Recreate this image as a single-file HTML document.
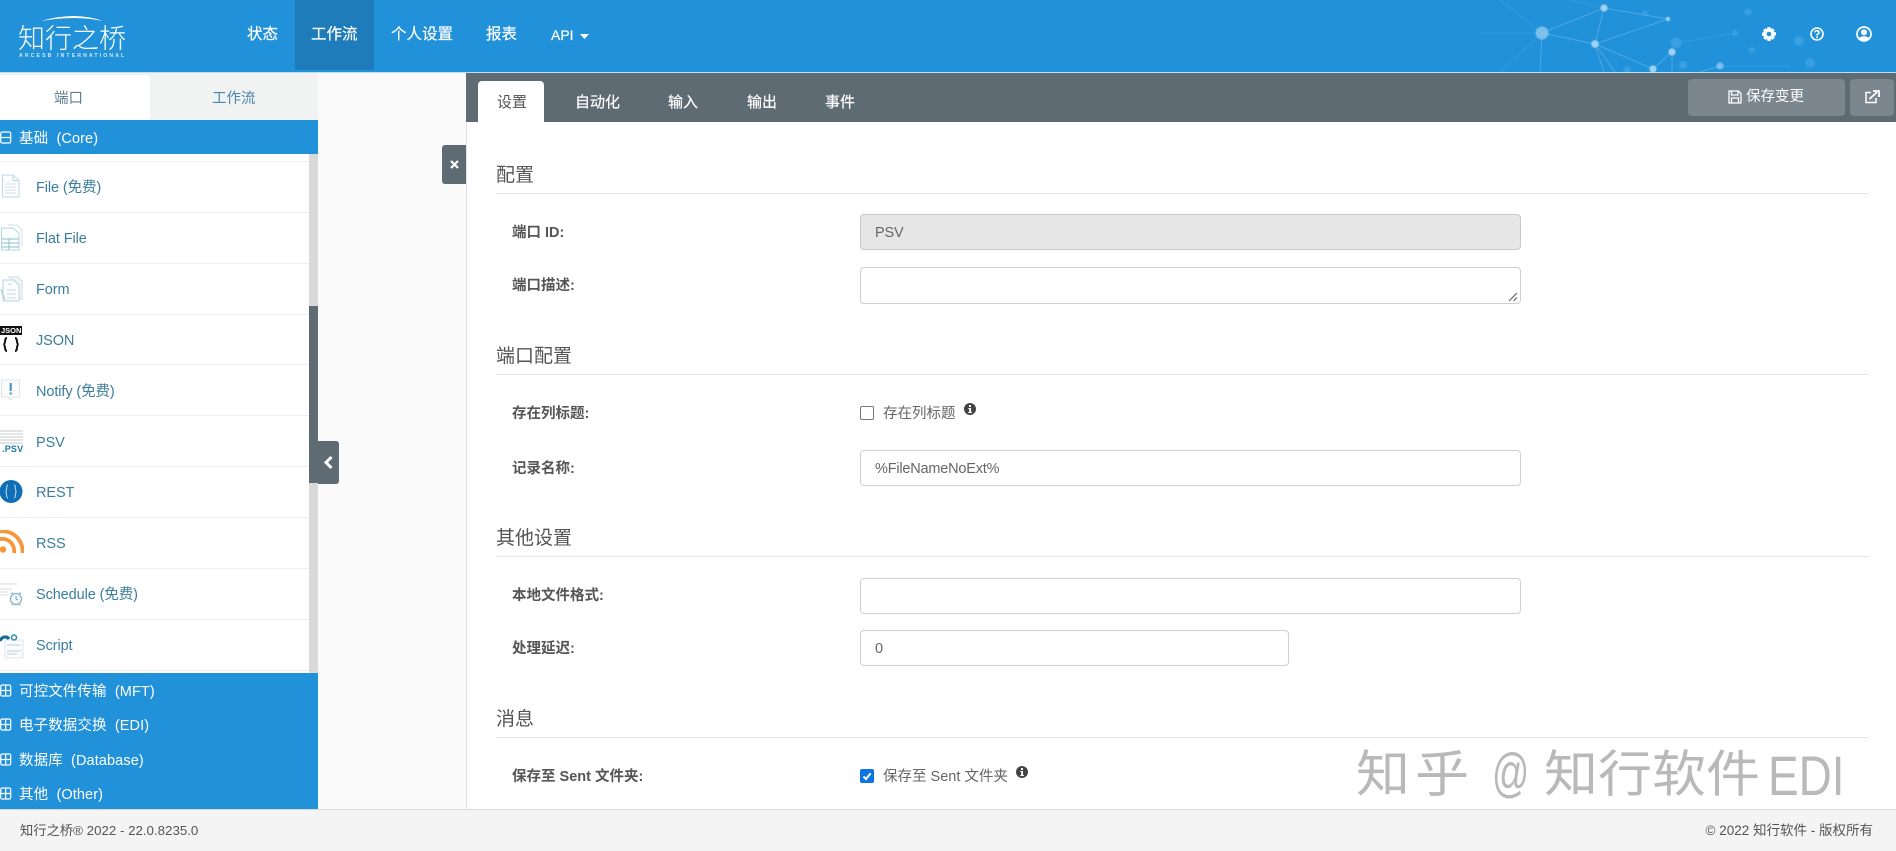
<!DOCTYPE html>
<html lang="zh"><head><meta charset="utf-8"><title>知行之桥</title>
<style>
html,body{margin:0;padding:0;width:1896px;height:851px;overflow:hidden;background:#fff}
body{position:relative;font-family:"Liberation Sans","Noto Sans CJK SC",sans-serif;font-size:14.5px;color:#555}
div,span,svg{position:absolute}
.t{white-space:nowrap;line-height:20px;height:20px}
.nav{color:#fff;font-size:15.5px;top:25px;-webkit-text-stroke:.2px #fff}
.tab{color:#fff;font-size:15px;top:93px;-webkit-text-stroke:.2px #fff}
.h{font-size:19px;color:#555;left:496px;line-height:26px;height:26px;white-space:nowrap}
.hr{left:496px;width:1373px;height:1px;background:#e5e5e5}
.lb{left:512px;font-weight:bold;font-size:14.5px;color:#555}
.in{left:860px;width:659px;height:34px;border:1px solid #cfcfcf;border-radius:4px;background:#fff;color:#666;font-size:14.5px;line-height:36px;text-indent:14px;letter-spacing:-.2px}
.sep{left:0;width:309px;height:1px;background:#eee}
.it{left:36px;color:#3b7d9e;font-size:14.5px;letter-spacing:-.1px}
.g{left:0;width:318px;background:#2191d9}
.gt{color:#fff;font-size:14.5px;left:19px;letter-spacing:.1px}
.chk{left:860px;width:12px;height:12px;border:1px solid #777;border-radius:2px;background:#fff}
.wm{color:#b9b9b9;font-size:54px;line-height:66px;top:740px;white-space:nowrap;font-weight:400;transform-origin:0 58px}
</style></head><body>

<!-- navbar -->
<div style="left:0;top:0;width:1896px;height:72px;background:#2191d9"></div>
<div style="left:0;top:72px;width:1896px;height:1px;background:#bcdff5"></div>
<div style="left:295px;top:0;width:79px;height:70px;background:#1f7cba"></div>
<svg style="left:1480px;top:0" width="416" height="72" viewBox="1480 0 416 72">
<g stroke="#7cc0ee" stroke-width="1" fill="none" opacity=".5">
<path d="M1542 33L1604 8L1668 19M1542 33L1595 44L1604 8M1595 44L1668 19M1595 44L1653 69M1595 44L1604 72M1595 44L1615 72M1542 33L1540 72M1653 69L1672 52L1672 72M1700 72L1720 66"/>
</g>
<g stroke="#7cc0ee" stroke-width="1" fill="none" opacity=".22">
<path d="M1500 0L1542 33M1542 33L1500 72M1676 43L1735 33M1720 66L1790 66M1570 0L1604 8M1480 33L1542 33"/>
</g>
<g fill="#9fd2f3" style="filter:blur(.5px)">
<circle cx="1542" cy="33" r="6.5" opacity=".7"/><circle cx="1604" cy="8" r="3.6"/><circle cx="1595" cy="44" r="3.8"/><circle cx="1668" cy="19" r="2.2"/><circle cx="1672" cy="52" r="3.6"/><circle cx="1653" cy="69" r="3.6"/><circle cx="1720" cy="66" r="3.6" opacity=".7"/>
</g>
<g fill="#48a9e6" opacity=".6" style="filter:blur(.6px)">
<circle cx="1676" cy="43" r="5.5"/><circle cx="1748" cy="12" r="3.8"/><circle cx="1735" cy="33" r="3"/><circle cx="1799" cy="41" r="5"/><circle cx="1752" cy="50" r="3.2"/><circle cx="1810" cy="63" r="5"/><circle cx="1683" cy="65" r="4"/><circle cx="1627" cy="70" r="3.5"/><circle cx="1645" cy="13" r="2.5"/>
</g>
</svg>
<svg style="left:15px;top:12px" width="115" height="18" viewBox="0 0 115 18"><path d="M26 9Q60 -1 88 9Q60 3 26 9Z" fill="#fff"/></svg>
<div class="t" style="left:18px;top:24px;color:#fff;font-size:27px;line-height:30px;height:30px;font-weight:300">知行之桥</div>
<div class="t" style="left:19px;top:52px;color:#fff;font-size:5.2px;line-height:9px;height:9px;letter-spacing:2.1px;font-weight:bold;opacity:.8">ARCESB INTERNATIONAL</div>
<div class="t nav" style="left:247px">状态</div>
<div class="t nav" style="left:311px">工作流</div>
<div class="t nav" style="left:391px">个人设置</div>
<div class="t nav" style="left:486px">报表</div>
<div class="t nav" style="left:551px;font-size:14px">API</div>
<svg style="left:580px;top:34px" width="9" height="5"><path d="M0 0H9L4.5 5Z" fill="#fff"/></svg>
<!-- gear, help, user -->
<svg style="left:1762px;top:27px" width="14" height="14" viewBox="0 0 14 14"><path fill="#fff" fill-rule="evenodd" d="M5.6 0H8.4L8.8 2L10.5 1.1L12.6 3.2L11.7 4.9L14 5.4V8.4L12 8.9L12.8 10.7L10.7 12.8L9 11.9L8.5 14H5.5L5 12L3.3 12.9L1.2 10.8L2.1 9.1L0 8.6V5.6L2 5.1L1.1 3.4L3.2 1.3L4.9 2.2ZM7 4.7A2.3 2.3 0 1 0 7 9.3A2.3 2.3 0 1 0 7 4.7Z"/></svg>
<svg style="left:1810px;top:27px" width="14" height="14" viewBox="0 0 14 14"><circle cx="7" cy="7" r="6" fill="none" stroke="#fff" stroke-width="1.6"/><path d="M4.9 5.4C5 3.2 9 3.2 9.1 5.4C9.1 7 7 6.8 7 8.5" fill="none" stroke="#fff" stroke-width="1.5"/><rect x="6.2" y="9.4" width="1.7" height="1.6" fill="#fff"/></svg>
<svg style="left:1856px;top:26px" width="16" height="16" viewBox="0 0 16 16"><circle cx="8" cy="8" r="7" fill="none" stroke="#fff" stroke-width="1.7"/><circle cx="8" cy="6.3" r="3" fill="#fff"/><path d="M2.8 12.5C4 9.5 12 9.5 13.2 12.5C11 15.5 5 15.5 2.8 12.5Z" fill="#fff"/></svg>

<!-- sidebar -->
<div style="left:0;top:73px;width:318px;height:47px;background:#f1f2f2"></div>
<div style="left:0;top:75px;width:150px;height:45px;background:#fff;border-radius:0 4px 0 0"></div>
<div class="t" style="left:54px;top:89px;color:#5f7d90;font-size:14.5px">端口</div>
<div class="t" style="left:212px;top:89px;color:#4a86aa;font-size:14.5px">工作流</div>
<div class="g" style="top:120px;height:34px"></div>
<svg style="left:0;top:131px" width="12" height="13"><rect x=".7" y="1" width="10" height="11" rx="1.5" fill="none" stroke="#fff" stroke-width="1.2"/><path d="M1 6.5H11" stroke="#fff" stroke-width="1.2"/></svg>
<div class="t gt" style="top:129px">基础&nbsp; (Core)</div>

<div style="left:0;top:154px;width:309px;height:519px;background:#fff"></div>
<div style="left:309px;top:154px;width:9px;height:519px;background:#d9d9d9"></div>
<div style="left:309px;top:306px;width:9px;height:177px;background:#5f6b73"></div>

<div class="sep" style="top:161px"></div><div class="sep" style="top:212px"></div><div class="sep" style="top:263px"></div><div class="sep" style="top:314px"></div><div class="sep" style="top:364px"></div><div class="sep" style="top:415px"></div><div class="sep" style="top:466px"></div><div class="sep" style="top:517px"></div><div class="sep" style="top:568px"></div><div class="sep" style="top:619px"></div><div class="sep" style="top:670px"></div>

<div class="t it" style="top:178px">File (免费)</div>
<div class="t it" style="top:229px">Flat File</div>
<div class="t it" style="top:280px">Form</div>
<div class="t it" style="top:331px">JSON</div>
<div class="t it" style="top:382px">Notify (免费)</div>
<div class="t it" style="top:433px">PSV</div>
<div class="t it" style="top:483px">REST</div>
<div class="t it" style="top:534px">RSS</div>
<div class="t it" style="top:585px">Schedule (免费)</div>
<div class="t it" style="top:636px">Script</div>

<!-- item icons -->
<svg style="left:0;top:174px" width="22" height="24" viewBox="0 0 22 24"><path d="M2.5 1H13L19 6.5V23H2.5Z M13 1V6.5H19" fill="#fbfdfe" stroke="#bcd9e3"/><path d="M5 10H16M5 13H16M5 16H16M5 19H16" stroke="#d4e3e8"/></svg>
<svg style="left:0;top:224px" width="24" height="28" viewBox="0 0 24 28"><path d="M8 1H17L22 6V22" fill="none" stroke="#d5e0e5"/><path d="M1.5 4H13L19 9V26H1.5Z" fill="#fbfdfe" stroke="#b5d5dc"/><path d="M1.5 15H19M1.5 19H19M1.5 23H19M9 15V26" stroke="#8cc0cc"/></svg>
<svg style="left:0;top:275px" width="24" height="28" viewBox="0 0 24 28"><path d="M8 2H18L22 6V24H16" fill="#f3f6f7" stroke="#cfdde2"/><path d="M3 5H14L19 10V26H3Z" fill="#fbfdfe" stroke="#b5d5dc"/><path d="M7 15H16M7 19H16M7 23H16M8 9H12" stroke="#c8dbe0"/><path d="M1 14L5 25" stroke="#9fc5cf"/></svg>
<svg style="left:0;top:326px" width="24" height="28" viewBox="0 0 24 28"><rect x="0" y="0" width="22" height="9" fill="#111"/><path d="M7 12C4 12 6 18 3.5 18.5C6 19 4 25 7 25M15 12C18 12 16 18 18.5 18.5C16 19 18 25 15 25" fill="none" stroke="#111" stroke-width="2"/></svg>
<div class="t" style="left:1px;top:326px;color:#fff;font-size:7.5px;font-weight:bold;line-height:9px;height:9px">JSON</div>
<svg style="left:0;top:378px" width="22" height="24" viewBox="0 0 22 24"><path d="M1.5 2H19.5V19H13L10.5 22L8 19H1.5Z" fill="#fbfbfb" stroke="#dde5e8"/><rect x="9.7" y="5" width="2" height="8" fill="#3f8fb5"/><rect x="9.7" y="14.5" width="2" height="2" fill="#3f8fb5"/></svg>
<svg style="left:0;top:429px" width="24" height="24" viewBox="0 0 24 24"><path d="M0 2H23M0 5H23M0 8H23M0 11H23M0 14H23" stroke="#d9dcde" stroke-width="1.5"/></svg>
<div class="t" style="left:2px;top:439px;color:#1e7a9c;font-size:9px;font-weight:bold;letter-spacing:.2px">.PSV</div>
<svg style="left:0;top:480px" width="24" height="24" viewBox="0 0 24 24"><circle cx="11" cy="11.5" r="11.5" fill="#0f6eb6"/><path d="M8 5C5.5 5 7.5 11 5.5 11.5C7.5 12 5.5 18 8 18M14 5C16.5 5 14.5 11 16.5 11.5C14.5 12 16.5 18 14 18" fill="none" stroke="#a9d0ec" stroke-width="1.2"/></svg>
<svg style="left:0;top:530px" width="24" height="24" viewBox="0 0 24 24"><path d="M-3 2A20 20 0 0 1 22.5 23" fill="none" stroke="#f7953a" stroke-width="3.8"/><path d="M-3 10A12 12 0 0 1 14 23" fill="none" stroke="#f7953a" stroke-width="3.8"/><circle cx="3" cy="19.5" r="3.2" fill="#f7953a"/></svg>
<svg style="left:0;top:582px" width="26" height="26" viewBox="0 0 26 26"><path d="M0 2H17M0 7H12M0 10H8M0 13H8" stroke="#d4dadd"/><circle cx="16" cy="17" r="5.5" fill="#f7fbfd" stroke="#6ea6bb"/><path d="M11 12L13 10.5M21 12L19 10.5M16 14V17L18 18M12.5 22L11.5 23.5M19.5 22L20.5 23.5" stroke="#6ea6bb" fill="none"/></svg>
<svg style="left:0;top:632px" width="26" height="28" viewBox="0 0 26 28"><rect x="5" y="8" width="18" height="18" fill="#fbfcfd" stroke="#dfe6e9"/><path d="M7 13H21M7 19H21M7 22H17" stroke="#bcccd3"/><path d="M0 9C2 4 7 4 9 7" fill="none" stroke="#0f6c94" stroke-width="3"/><circle cx="14" cy="5.5" r="2.5" fill="none" stroke="#2f8cb0" stroke-width="1.5"/></svg>

<div class="g" style="top:673px;height:136px"></div>
<svg style="left:0;top:684px" width="12" height="13"><rect x=".7" y="1" width="10" height="11" rx="1.5" fill="none" stroke="#fff" stroke-width="1.2"/><path d="M1 6.5H11M5.7 1V12" stroke="#fff" stroke-width="1.2"/></svg>
<svg style="left:0;top:718px" width="12" height="13"><rect x=".7" y="1" width="10" height="11" rx="1.5" fill="none" stroke="#fff" stroke-width="1.2"/><path d="M1 6.5H11M5.7 1V12" stroke="#fff" stroke-width="1.2"/></svg>
<svg style="left:0;top:753px" width="12" height="13"><rect x=".7" y="1" width="10" height="11" rx="1.5" fill="none" stroke="#fff" stroke-width="1.2"/><path d="M1 6.5H11M5.7 1V12" stroke="#fff" stroke-width="1.2"/></svg>
<svg style="left:0;top:787px" width="12" height="13"><rect x=".7" y="1" width="10" height="11" rx="1.5" fill="none" stroke="#fff" stroke-width="1.2"/><path d="M1 6.5H11M5.7 1V12" stroke="#fff" stroke-width="1.2"/></svg>
<div class="t gt" style="top:682px">可控文件传输&nbsp; (MFT)</div>
<div class="t gt" style="top:716px">电子数据交换&nbsp; (EDI)</div>
<div class="t gt" style="top:751px">数据库&nbsp; (Database)</div>
<div class="t gt" style="top:785px">其他&nbsp; (Other)</div>

<!-- middle column -->
<div style="left:318px;top:73px;width:148px;height:736px;background:#fafafb"></div>
<div style="left:318px;top:441px;width:21px;height:43px;background:#5f6b73;border-radius:0 3px 3px 0"></div>
<svg style="left:323px;top:455px" width="11" height="15" viewBox="0 0 11 15"><path d="M8.5 2L3 7.5L8.5 13" fill="none" stroke="#fff" stroke-width="3"/></svg>
<div style="left:466px;top:73px;width:1px;height:736px;background:#e3e3e3"></div>
<div style="left:442px;top:145px;width:24px;height:39px;background:#5f6b73;border-radius:3px 0 0 3px"></div>
<svg style="left:450px;top:160px" width="9" height="9" viewBox="0 0 9 9"><path d="M1 1L8 8M8 1L1 8" stroke="#fff" stroke-width="2.2"/></svg>

<!-- main tabs -->
<div style="left:466px;top:73px;width:1430px;height:49px;background:#5f6b73"></div>
<div style="left:478px;top:81px;width:66px;height:41px;background:#fff;border-radius:4px 4px 0 0"></div>
<div class="t tab" style="left:497px;color:#555;-webkit-text-stroke:0">设置</div>
<div class="t tab" style="left:575px">自动化</div>
<div class="t tab" style="left:668px">输入</div>
<div class="t tab" style="left:747px">输出</div>
<div class="t tab" style="left:825px">事件</div>
<div style="left:1688px;top:79px;width:157px;height:37px;background:#7b868e;border-radius:4px"></div>
<div style="left:1850px;top:79px;width:44px;height:37px;background:#7b868e;border-radius:4px"></div>
<svg style="left:1728px;top:90px" width="14" height="14" viewBox="0 0 14 14"><path d="M1 1H10.5L13 3.5V13H1Z M3.5 1V5H10V1 M3.5 13V8H10.5V13" fill="none" stroke="#fff" stroke-width="1.3"/></svg>
<div class="t" style="left:1746px;top:87px;color:#fff;font-size:14.5px">保存变更</div>
<svg style="left:1864px;top:90px" width="16" height="14" viewBox="0 0 16 14"><path d="M7 2.5H2V12.5H12V8" fill="none" stroke="#fff" stroke-width="1.5"/><path d="M5.5 9L13 2M9 1H15V7" fill="none" stroke="#fff" stroke-width="1.8"/></svg>

<!-- form -->
<div class="h" style="top:163px">配置</div><div class="hr" style="top:193px"></div>
<div class="t lb" style="top:223px">端口 ID:</div>
<div class="in" style="top:214px;background:#e6e6e6;border-color:#c8c8c8">PSV</div>
<div class="t lb" style="top:276px">端口描述:</div>
<div class="in" style="top:267px;height:35px"></div>
<svg style="left:1508px;top:292px" width="10" height="10"><path d="M1 9L9 1M5.5 9L9 5.5" stroke="#555" stroke-width="1"/></svg>

<div class="h" style="top:344px">端口配置</div><div class="hr" style="top:374px"></div>
<div class="t lb" style="top:404px">存在列标题:</div>
<div class="chk" style="top:406px"></div>
<div class="t" style="left:883px;top:404px;color:#666">存在列标题</div>
<svg style="left:964px;top:403px" width="12" height="12" viewBox="0 0 12 12"><circle cx="6" cy="6" r="6" fill="#444"/><rect x="5" y="2" width="2" height="2" fill="#fff"/><path d="M4.3 5H7V9H8V10H4.3V9H5.2V6H4.3Z" fill="#fff"/></svg>
<div class="t lb" style="top:459px">记录名称:</div>
<div class="in" style="top:450px">%FileNameNoExt%</div>

<div class="h" style="top:526px">其他设置</div><div class="hr" style="top:556px"></div>
<div class="t lb" style="top:586px">本地文件格式:</div>
<div class="in" style="top:578px"></div>
<div class="t lb" style="top:639px">处理延迟:</div>
<div class="in" style="top:630px;width:427px">0</div>

<div class="h" style="top:707px">消息</div><div class="hr" style="top:737px"></div>
<div class="t lb" style="top:767px">保存至 Sent 文件夹:</div>
<div class="chk" style="top:769px;background:#0d75e0;border-color:#0d75e0"></div>
<svg style="left:861px;top:770px" width="12" height="12" viewBox="0 0 12 12"><path d="M2.5 6.5L5 9L9.7 3.2" fill="none" stroke="#fff" stroke-width="2"/></svg>
<div class="t" style="left:883px;top:767px;color:#666">保存至 Sent 文件夹</div>
<svg style="left:1016px;top:766px" width="12" height="12" viewBox="0 0 12 12"><circle cx="6" cy="6" r="6" fill="#444"/><rect x="5" y="2" width="2" height="2" fill="#fff"/><path d="M4.3 5H7V9H8V10H4.3V9H5.2V6H4.3Z" fill="#fff"/></svg>

<!-- watermark -->
<div class="wm" style="left:1356px;letter-spacing:5px;transform:scaleY(.93)">知乎</div>
<div class="wm" style="left:1492px;transform:scaleX(.68)">@</div>
<div class="wm" style="left:1544px;transform:scaleY(.93)">知行软件</div>
<div class="wm" style="left:1768px;top:743px;font-size:56px;transform:scaleX(.82)">EDI</div>

<!-- footer -->
<div style="left:0;top:809px;width:1896px;height:42px;background:#f4f4f4;border-top:1px solid #d9d9d9;box-sizing:border-box"></div>
<div class="t" style="left:20px;top:821px;font-size:13.3px;color:#555">知行之桥® 2022 - 22.0.8235.0</div>
<div class="t" style="right:23px;top:821px;font-size:13.5px;color:#555">© 2022 知行软件 - 版权所有</div>
</body></html>
